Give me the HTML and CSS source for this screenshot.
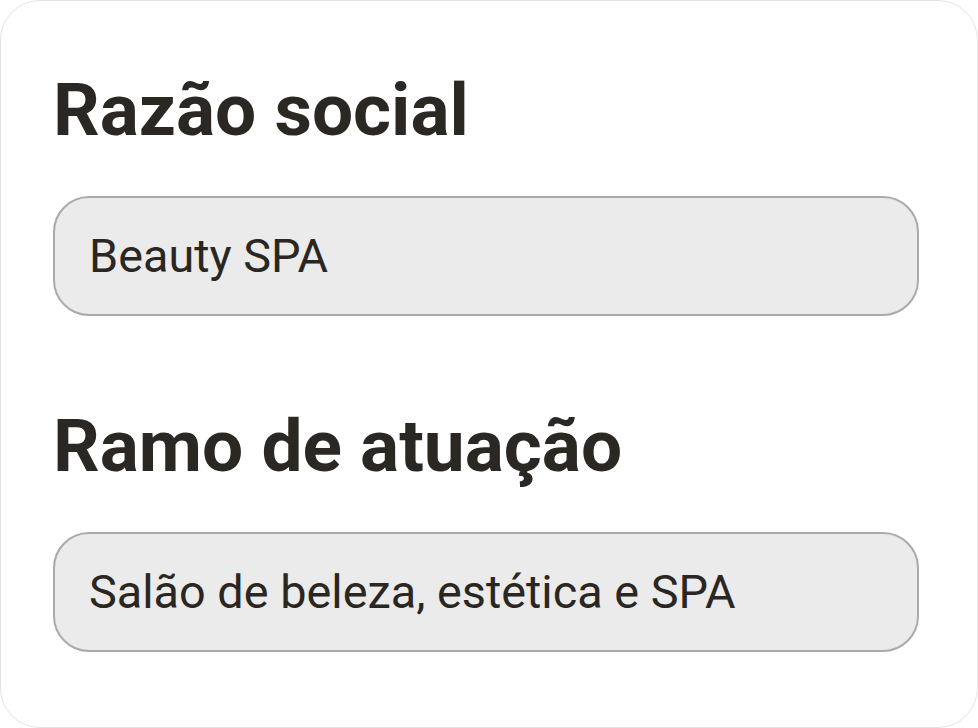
FILE: index.html
```html
<!DOCTYPE html>
<html lang="pt-BR">
<head>
<meta charset="utf-8">
<title>Dados da empresa</title>
<link rel="stylesheet" href="styles.css">
</head>
<body>
<main class="card">
  <section class="field">
    <h2 class="label">Razão social</h2>
    <div class="input">Beauty SPA</div>
  </section>
  <section class="field field-second">
    <h2 class="label">Ramo de atuação</h2>
    <div class="input">Salão de beleza, estética e SPA</div>
  </section>
</main>
</body>
</html>
```

FILE: styles.css
```css
* { box-sizing: border-box; }
html, body { margin: 0; padding: 0; background: #ffffff; }
body { width: 978px; height: 728px; overflow: hidden; font-family: Roboto, "Liberation Sans", sans-serif; }
.card {
  width: 978px;
  height: 728px;
  border: 1px solid #e4e4e4;
  border-radius: 40px;
  background: #fff;
  padding: 73px 58px 0 52px;
  display: flex;
  flex-direction: column;
}
.field { display: flex; flex-direction: column; gap: 49px; }
.field-second { margin-top: 94px; }
.label {
  margin: 0;
  font-size: 73px;
  line-height: 73px;
  font-weight: 700;
  color: #2b2824;
}
.input {
  height: 120px;
  border: 2px solid #aaaaaa;
  border-radius: 36px;
  background: #ebebeb;
  padding: 0 34px;
  display: flex;
  align-items: center;
  font-size: 46.8px;
  color: #2a2622;
}
```
